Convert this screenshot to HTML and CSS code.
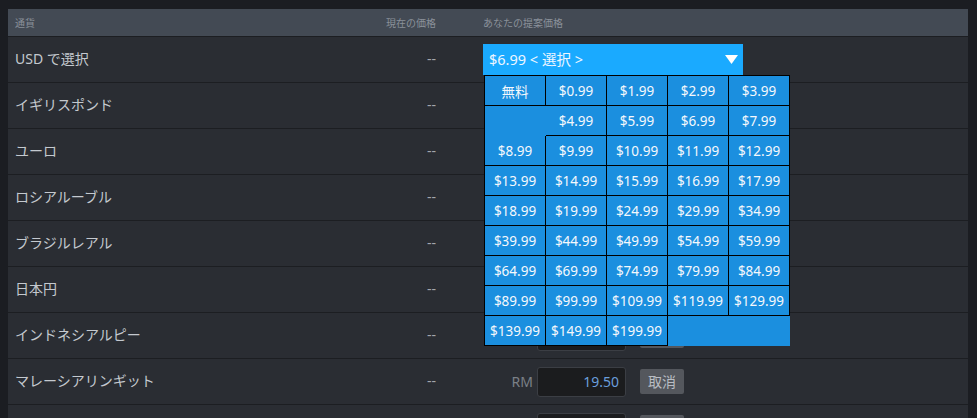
FILE: index.html
```html
<!DOCTYPE html>
<html lang="ja">
<head>
<meta charset="utf-8">
<title>価格</title>
<link rel="stylesheet" href="styles.css">
</head>
<body>
<div class="table">
  <div class="thead">
    <div class="c-name">通貨</div>
    <div class="c-price">現在の価格</div>
    <div class="c-offer">あなたの提案価格</div>
  </div>
  <div class="row">
    <div class="c-name">USD で選択</div>
    <div class="c-price">--</div>
    <div class="c-offer">
      <div class="select">
        <div class="select-box">
          <span>$6.99 &lt; 選択 &gt;</span>
          <svg class="caret" width="13" height="9" viewBox="0 0 13 9"><polygon points="0,0 13,0 6.5,9" fill="#ffffff"/></svg>
        </div>
        <div class="menu">
          <div class="opt">無料</div><div class="opt">$0.99</div><div class="opt">$1.99</div><div class="opt">$2.99</div><div class="opt">$3.99</div>
          <div class="opt opt-empty"></div><div class="opt">$4.99</div><div class="opt">$5.99</div><div class="opt">$6.99</div><div class="opt">$7.99</div>
          <div class="opt">$8.99</div><div class="opt">$9.99</div><div class="opt">$10.99</div><div class="opt">$11.99</div><div class="opt">$12.99</div>
          <div class="opt">$13.99</div><div class="opt">$14.99</div><div class="opt">$15.99</div><div class="opt">$16.99</div><div class="opt">$17.99</div>
          <div class="opt">$18.99</div><div class="opt">$19.99</div><div class="opt">$24.99</div><div class="opt">$29.99</div><div class="opt">$34.99</div>
          <div class="opt">$39.99</div><div class="opt">$44.99</div><div class="opt">$49.99</div><div class="opt">$54.99</div><div class="opt">$59.99</div>
          <div class="opt">$64.99</div><div class="opt">$69.99</div><div class="opt">$74.99</div><div class="opt">$79.99</div><div class="opt">$84.99</div>
          <div class="opt">$89.99</div><div class="opt">$99.99</div><div class="opt">$109.99</div><div class="opt">$119.99</div><div class="opt">$129.99</div>
          <div class="opt">$139.99</div><div class="opt">$149.99</div><div class="opt">$199.99</div>
        </div>
      </div>
    </div>
  </div>
  <div class="row">
    <div class="c-name">イギリスポンド</div>
    <div class="c-price">--</div>
    <div class="c-offer"><span class="cur">£</span><input class="price-input" type="text" value="5.59"><button class="btn">取消</button></div>
  </div>
  <div class="row">
    <div class="c-name">ユーロ</div>
    <div class="c-price">--</div>
    <div class="c-offer"><span class="cur">€</span><input class="price-input" type="text" value="6.59"><button class="btn">取消</button></div>
  </div>
  <div class="row">
    <div class="c-name">ロシアルーブル</div>
    <div class="c-price">--</div>
    <div class="c-offer"><span class="cur">₽</span><input class="price-input" type="text" value="299"><button class="btn">取消</button></div>
  </div>
  <div class="row">
    <div class="c-name">ブラジルレアル</div>
    <div class="c-price">--</div>
    <div class="c-offer"><span class="cur">R$</span><input class="price-input" type="text" value="22.99"><button class="btn">取消</button></div>
  </div>
  <div class="row">
    <div class="c-name">日本円</div>
    <div class="c-price">--</div>
    <div class="c-offer"><span class="cur">¥</span><input class="price-input" type="text" value="720"><button class="btn">取消</button></div>
  </div>
  <div class="row">
    <div class="c-name">インドネシアルピー</div>
    <div class="c-price">--</div>
    <div class="c-offer"><span class="cur">Rp</span><input class="price-input" type="text" value="60999"><button class="btn">取消</button></div>
  </div>
  <div class="row">
    <div class="c-name">マレーシアリンギット</div>
    <div class="c-price">--</div>
    <div class="c-offer"><span class="cur">RM</span><input class="price-input" type="text" value="19.50"><button class="btn">取消</button></div>
  </div>
  <div class="row">
    <div class="c-name">シンガポールドル</div>
    <div class="c-price">--</div>
    <div class="c-offer"><span class="cur">S$</span><input class="price-input" type="text" value="6.79"><button class="btn">取消</button></div>
  </div>
</div>
</body>
</html>
```

FILE: styles.css
```css
html, body {
  margin: 0;
  height: 100%;
  overflow: hidden;
}
body {
  background: #1b1d22;
  padding: 9px 9px 0 8px;
  box-sizing: border-box;
  font-family: "Noto Sans", "Noto Sans CJK JP", sans-serif;
}
.table {
  width: 960px;
  background: #2a2d33;
}
.thead {
  display: flex;
  align-items: center;
  height: 27px;
  background: #434a54;
  border-bottom: 1px solid #1c1e22;
  font-size: 10px;
  color: #8a919a;
}
.row {
  display: flex;
  align-items: center;
  height: 45px;
  border-bottom: 1px solid #1c1e22;
  font-size: 14px;
  color: #c4c9cf;
}
.c-name {
  width: 293px;
  padding-left: 7px;
}
.c-price {
  width: 128px;
  text-align: right;
}
.row .c-name,
.row .c-price {
  padding-bottom: 3px;
}
.row .c-price {
  color: #a2a6ac;
}
.c-offer {
  margin-left: 47px;
  display: flex;
  align-items: center;
}
.select {
  position: relative;
}
.select-box {
  width: 260px;
  height: 31px;
  box-sizing: border-box;
  background: #1aaaff;
  color: #eef6ff;
  font-size: 14.5px;
  padding: 0 5px 3px 6px;
  display: flex;
  align-items: center;
  justify-content: space-between;
}
.caret {
  display: block;
  margin-top: 3px;
}
.menu {
  position: absolute;
  top: 31px;
  left: 1px;
  z-index: 10;
  width: 306px;
  box-sizing: border-box;
  border-left: 1px solid #000;
  border-top: 1px solid #000;
  background: #1b8fdf;
  display: flex;
  flex-wrap: wrap;
}
.opt {
  width: 60px;
  height: 29px;
  border-right: 1px solid #000;
  border-bottom: 1px solid #000;
  display: flex;
  align-items: center;
  justify-content: center;
  color: #f4f8fc;
  font-size: 13.5px;
}
.opt-empty {
  border-color: transparent;
}
.cur {
  width: 50px;
  text-align: right;
  color: #7b8087;
  font-size: 14px;
}
.price-input {
  margin-left: 4px;
  width: 89px;
  height: 30px;
  box-sizing: border-box;
  background: #1b1c1e;
  border: 1px solid #3b3e44;
  border-radius: 3px;
  color: #6a9edc;
  font-family: "Noto Sans", sans-serif;
  font-size: 14px;
  text-align: right;
  padding: 0 6px 0 0;
  outline: none;
}
.btn {
  margin-left: 14px;
  width: 44px;
  height: 25px;
  padding: 0;
  border: none;
  background: #54575d;
  color: #b9bdc3;
  border-radius: 2px;
  font-family: "Noto Sans", "Noto Sans CJK JP", sans-serif;
  font-size: 14px;
  line-height: 25px;
}
```
